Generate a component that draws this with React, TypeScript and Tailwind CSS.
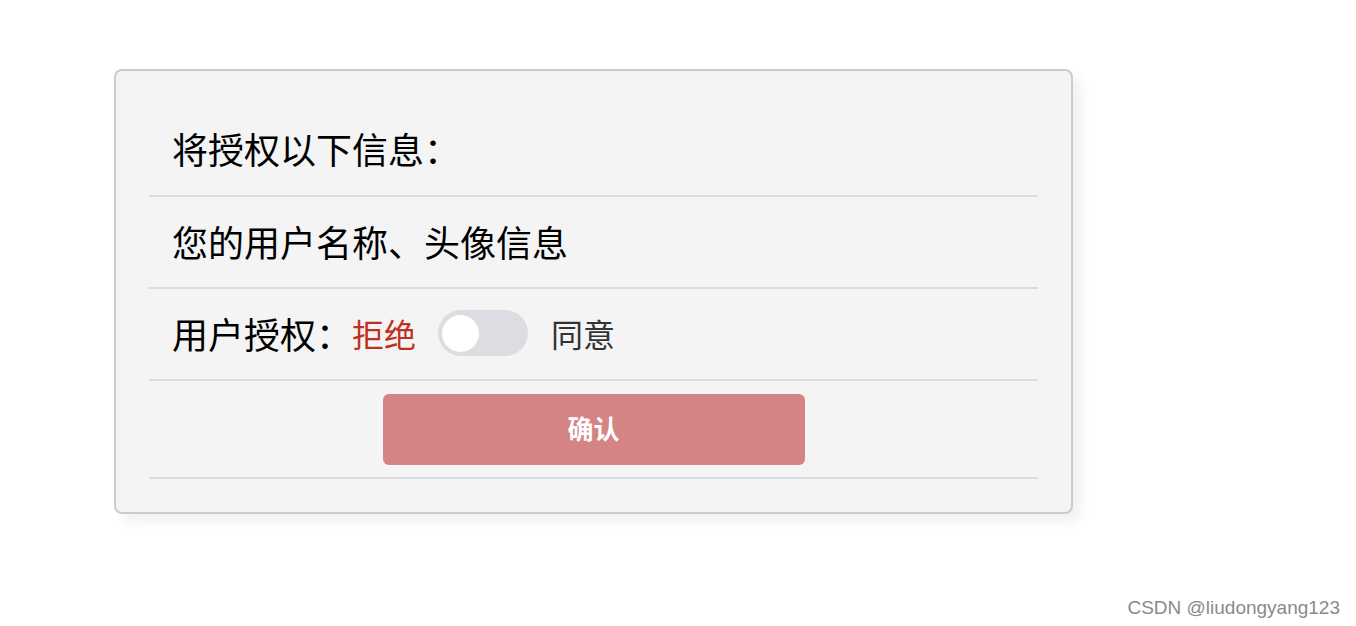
import React from "react";

export default function App() {
  const cjk = { fontFamily: '"Noto Sans CJK SC", "Noto Sans", sans-serif' };
  return (
    <div className="relative h-[626px] w-[1356px] bg-white" style={cjk}>
      <div className="absolute left-[114px] top-[69px] w-[959px] rounded-[8px] border-2 border-[#cccccc] bg-[#f4f4f4] px-[33px] pt-[32px] pb-[33px] shadow-[8px_8px_12px_rgba(0,0,0,0.06)]">
        <div className="flex h-[94px] items-center border-b-2 border-[#dcdcdc] pl-[23px] pb-[3px] text-[36px] leading-none text-black">
          将授权以下信息：
        </div>
        <div className="flex h-[92px] items-center border-b-2 border-[#dcdcdc] pl-[23px] pb-[3px] text-[36px] leading-none text-black">
          您的用户名称、头像信息
        </div>
        <div className="flex h-[92px] items-center border-b-2 border-[#dcdcdc] pl-[23px] pb-[2px] leading-none">
          <span className="text-[36px] text-black">用户授权：</span>
          <span className="text-[32px] text-[#c0301e]">拒绝</span>
          <div className="ml-[22px] flex h-[46px] w-[90px] items-center rounded-full bg-[#dcdde2] px-[4px]">
            <div className="h-[37px] w-[37px] rounded-full bg-white" />
          </div>
          <span className="ml-[23px] text-[32px] text-[#333333]">同意</span>
        </div>
        <div className="flex h-[98px] items-center justify-center border-b-2 border-[#dcdcdc]">
          <button className="flex h-[71px] w-[422px] items-center justify-center rounded-[6px] bg-[#d48484] pb-[3px] text-[26px] font-bold text-white">
            确认
          </button>
        </div>
      </div>
      <div
        className="absolute right-[16px] top-[594px] text-[19px] text-[#8a8a8a]"
        style={{ fontFamily: '"Liberation Sans", Arial, sans-serif' }}
      >
        CSDN @liudongyang123
      </div>
    </div>
  );
}
